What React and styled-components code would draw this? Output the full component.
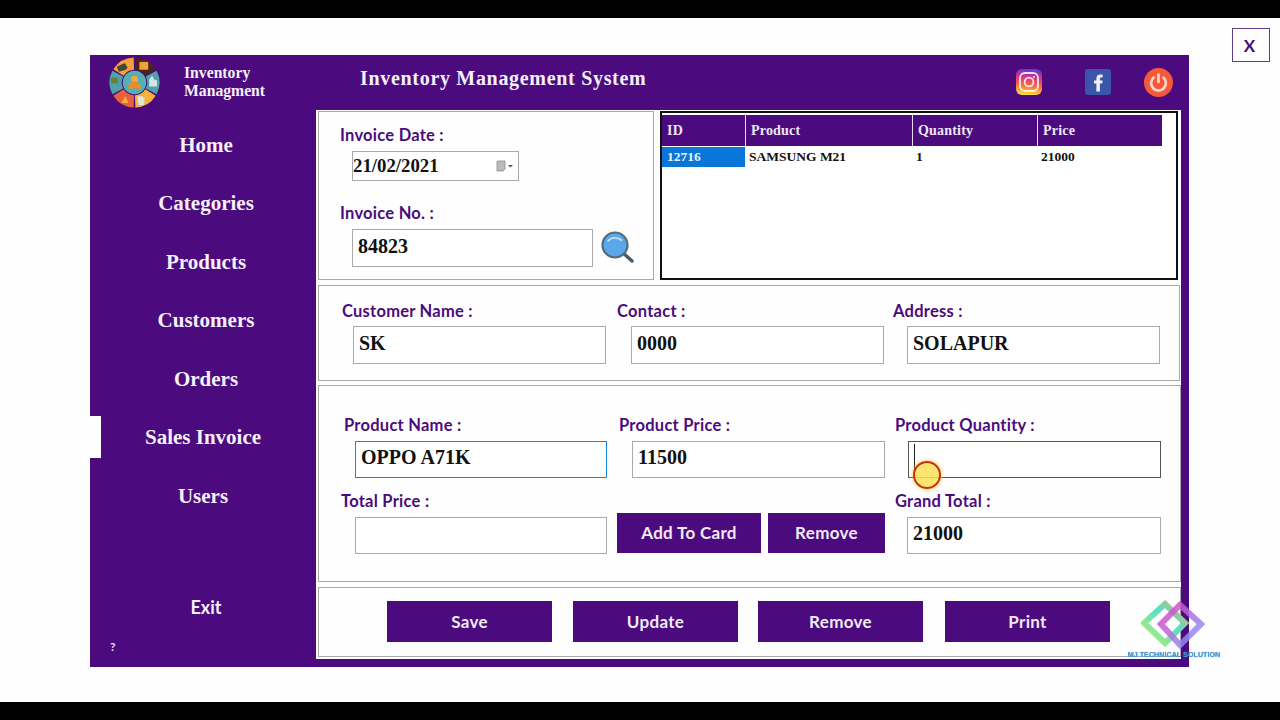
import styled, { createGlobalStyle } from "styled-components";

const PURPLE = "#4b0b7e";

const GlobalStyle = createGlobalStyle`
    html, body {
        margin: 0;
        padding: 0;
        background: #000;
    }
    * {
        box-sizing: border-box;
    }
`;

const Page = styled.div`
    width: 1280px;
    height: 720px;
    overflow: hidden;
    display: flex;
    flex-direction: column;
    background: #000;
`;

const Stage = styled.div`
    height: 684px;
    margin-top: 18px;
    background: #fefefe;
    display: flex;
    align-items: flex-start;
    padding: 10px 0 0 90px;
`;

const Window = styled.div`
    position: relative;
    width: 1099px;
    height: 612px;
    margin-top: 27px;
    background: ${PURPLE};
    display: grid;
    grid-template-columns: 226px 873px;
`;

const CloseButton = styled.div`
    width: 38px;
    height: 34px;
    margin-left: 43px;
    padding-right: 3px;
    border: 1px solid #5d3f86;
    color: ${PURPLE};
    font: 700 17px "Lato", sans-serif;
    display: flex;
    align-items: center;
    justify-content: center;
`;

const Sidebar = styled.aside`
    display: flex;
    flex-direction: column;
    color: #f6f0fb;
    font-family: "Liberation Serif", serif;
`;

const Brand = styled.div`
    height: 61px;
    display: flex;
    align-items: flex-start;
    padding: 2px 0 0 19px;
    gap: 24px;
`;

const BrandName = styled.div`
    font-size: 15.7px;
    font-weight: 700;
    line-height: 18px;
    margin-top: 7px;
`;

const LogoSvg = styled.svg`
    flex-shrink: 0;
`;

const Nav = styled.nav`
    display: flex;
    flex-direction: column;
`;

const NavItem = styled.div`
    position: relative;
    height: 58.5px;
    padding-left: ${(p) => (p.$shift ? 0 : 6)}px;
    display: flex;
    align-items: center;
    justify-content: center;
    font-size: 21px;
    font-weight: 700;
    ${(p) =>
        p.$active &&
        `&::before {
            content: "";
            position: absolute;
            left: 0;
            top: 7px;
            width: 11px;
            height: 42px;
            background: #fff;
        }`}
`;

const ExitItem = styled(NavItem)`
    margin-top: 52px;
    height: 58px;
    font-family: "Lato", sans-serif;
    font-size: 18px;
`;

const Help = styled.div`
    margin: 3px 0 0 20px;
    font: 700 12px "Lato", sans-serif;
    color: #eadff3;
`;

const Main = styled.main`
    display: flex;
    flex-direction: column;
`;

const TitleBar = styled.header`
    height: 55px;
    display: flex;
    align-items: center;
    padding: 0 14px 2px 44px;
`;

const AppTitle = styled.h1`
    flex: 1;
    margin: 0 0 6px;
    color: #f6f0fb;
    font: 700 20px "Liberation Serif", serif;
    letter-spacing: 0.69px;
`;

const SocialIcons = styled.div`
    display: flex;
    align-items: center;
    margin-top: 1px;
    padding-right: 2px;
`;

const SocialSlot = styled.div`
    height: 30px;
    margin-left: ${(p) => p.$gap}px;
    flex-shrink: 0;
    display: flex;
    align-items: center;
    justify-content: center;
`;

const Content = styled.div`
    width: 865px;
    height: 549px;
    background: #fdfdfd;
    padding: 1px 1px 0 2px;
    display: flex;
    flex-direction: column;
`;

const TopRow = styled.div`
    display: flex;
    gap: 6px;
    height: 169px;
`;

const Panel = styled.section`
    border: 1px solid #a9a9a9;
    background: #fefefe;
`;

const InvoicePanel = styled(Panel)`
    width: 336px;
    height: 169px;
    padding: 13px 0 0 21px;
`;

const Label = styled.div`
    color: ${PURPLE};
    font: 700 16.5px/20px "Lato", sans-serif;
    letter-spacing: 0.25px;
    height: 20px;
    white-space: nowrap;
`;

const TextBox = styled.div`
    width: ${(p) => p.$width || 253}px;
    height: ${(p) => p.$height || 38}px;
    margin-left: ${(p) => p.$indent ?? 14}px;
    padding: 0 0 4px ${(p) => p.$pad ?? 5}px;
    border: 1px solid ${(p) => p.$border || "#a9a9a9"};
    background: #fff;
    color: #111;
    font: 700 20px "Liberation Serif", serif;
    display: flex;
    align-items: center;
`;

const DateBox = styled(TextBox)`
    height: 30px;
    justify-content: space-between;
    padding: 0 4px 0 0;
    font-size: 18.8px;
    margin-top: 6px;
`;

const InvoiceNoLabel = styled(Label)`
    margin-top: 22px;
`;

const InvoiceNoRow = styled.div`
    display: flex;
    align-items: center;
    margin-top: 6px;
`;

const SearchSlot = styled.div`
    margin-left: 8px;
    display: flex;
`;

const TablePanel = styled.section`
    width: 518px;
    height: 169px;
    border: 2px solid #111;
    background: #fff;
    padding: 2px 0 0 0;
`;

const TableHead = styled.div`
    width: 500px;
    height: 31px;
    display: grid;
    grid-template-columns: 83px 167px 125px 125px;
    background: ${PURPLE};
`;

const HeadCell = styled.div`
    padding-left: 5px;
    color: #efe6f6;
    font: 700 14px "Liberation Serif", serif;
    letter-spacing: 0.2px;
    display: flex;
    align-items: center;
    border-left: ${(p) => (p.$first ? "0" : "1px solid #e5dbee")};
`;

const TableRow = styled.div`
    width: 500px;
    height: 20px;
    margin-top: 1px;
    display: grid;
    grid-template-columns: 83px 167px 125px 125px;
`;

const RowCell = styled.div`
    padding-left: ${(p) => (p.$selected ? 5 : 4)}px;
    color: ${(p) => (p.$selected ? "#e8f2fb" : "#111")};
    background: ${(p) => (p.$selected ? "#0a77d8" : "transparent")};
    font: 700 13.5px "Liberation Serif", serif;
    display: flex;
    align-items: center;
`;

const CustomerPanel = styled(Panel)`
    width: 862px;
    height: 96px;
    margin-top: 5px;
    padding: 15px 0 0 23px;
    display: grid;
    grid-template-columns: 275px 276px 276px;
    align-content: start;
`;

const ProductPanel = styled(Panel)`
    width: 863px;
    height: 197px;
    margin-top: 4px;
    padding: 29px 0 0 25px;
    display: grid;
    grid-template-columns: 275px 276px 276px;
    align-content: start;
    row-gap: 13px;
`;

const Field = styled.div`
    display: flex;
    flex-direction: column;
    gap: ${(p) => p.$gap ?? 5}px;
`;

const ShiftedField = styled(Field)`
    margin-left: ${(p) => p.$left}px;
`;

const ButtonPair = styled.div`
    display: flex;
    gap: 7px;
    margin: 22px 0 0 -2px;
`;

const Button = styled.div`
    width: ${(p) => p.$width}px;
    height: ${(p) => p.$height || 41}px;
    margin-left: ${(p) => p.$left || 0}px;
    padding-bottom: 1px;
    background: ${PURPLE};
    color: #f1e9f8;
    font: 700 17px "Lato", sans-serif;
    letter-spacing: 0.3px;
    display: flex;
    align-items: center;
    justify-content: center;
`;

const ActionPanel = styled(Panel)`
    width: 863px;
    height: 70px;
    margin-top: 5px;
    padding: 13px 0 0 68px;
    display: flex;
`;

const Caret = styled.span`
    display: inline-block;
    width: 1px;
    height: 28px;
    background: #222;
`;

const CursorMark = styled.div`
    position: absolute;
    left: 823px;
    top: 406px;
    width: 28px;
    height: 28px;
    border-radius: 50%;
    background: rgba(252, 224, 90, 0.86);
    border: 2px solid #c8330f;
    box-shadow: 0 0 4px rgba(250, 190, 50, 0.95);
`;

const Watermark = styled.div`
    position: absolute;
    left: 1037px;
    top: 544px;
    width: 94px;
    display: flex;
    flex-direction: column;
    align-items: center;
`;

const WatermarkText = styled.div`
    margin-top: -3px;
    color: #4a98d2;
    font: 700 7.2px "Liberation Sans", sans-serif;
    text-shadow: 0 0 1px #4a98d2;
    white-space: nowrap;
    filter: blur(0.4px);
`;

// annular sector path for the logo wheel
function sector(a0, a1, r0, r1) {
    const pt = (a, r) => {
        const t = (a * Math.PI) / 180;
        return `${(r * Math.cos(t)).toFixed(2)} ${(r * Math.sin(t)).toFixed(2)}`;
    };
    return `M${pt(a0, r0)} L${pt(a0, r1)} A${r1} ${r1} 0 0 1 ${pt(a1, r1)} L${pt(a1, r0)} A${r0} ${r0} 0 0 0 ${pt(a0, r0)} Z`;
}

function LogoIcon() {
    const parts = [
        { a: 212, b: 268, c: "#f5a03c" },
        { a: 272, b: 328, c: "#4a2418" },
        { a: 332, b: 28, c: "#4fa3a8" },
        { a: 32, b: 88, c: "#f7b23b" },
        { a: 92, b: 148, c: "#e8603c" },
        { a: 152, b: 208, c: "#4fa3a8" },
    ];
    return (
        <LogoSvg width="51" height="51" viewBox="-26 -26 52 52">
            {parts.map((s) => (
                <path key={s.a} d={sector(s.a, s.b, 13, 25.5)} fill={s.c} />
            ))}
            <circle r="12" fill="#55b0b5" />
            <circle cy="-3.5" r="3.5" fill="#f5a83c" />
            <path d="M-7 6 Q-6 -1 0 -1 Q6 -1 7 6 Z" fill="#ec8a30" />
            <path d="M-18 -16L-10 -20L-7 -15L-9 -13L-16 -11Z" fill="#3d4a35" />
            <rect x="5" y="-21" width="9" height="8" fill="#f0a23a" />
            <path d="M15 4V-3L18 -7L20 -3L23 -2V4Z" fill="#e9f0ee" opacity="0.85" />
            <path d="M3 14H8L10 16V23H4Z" fill="#dbe7dd" />
            <path d="M-13 21L-9.5 14L-6 21Z" fill="#f7b23b" />
            <rect x="-24" y="-5" width="7" height="6" fill="#6d7f35" />
        </LogoSvg>
    );
}

function InstagramIcon() {
    return (
        <svg width="26" height="26" viewBox="0 0 26 26">
            <defs>
                <linearGradient id="ig" x1="0.45" y1="1" x2="0.55" y2="0">
                    <stop offset="0" stopColor="#fde03a" />
                    <stop offset="0.35" stopColor="#f9703a" />
                    <stop offset="0.7" stopColor="#d62f8c" />
                    <stop offset="1" stopColor="#5f3ad0" />
                </linearGradient>
            </defs>
            <rect width="26" height="26" rx="6" fill="url(#ig)" />
            <rect x="4" y="4" width="18" height="18" rx="5" fill="none" stroke="#fff" strokeOpacity="0.85" strokeWidth="1.8" />
            <circle cx="13" cy="13" r="4.4" fill="none" stroke="#fff" strokeOpacity="0.85" strokeWidth="1.8" />
            <circle cx="18" cy="8" r="1.1" fill="#fff" fillOpacity="0.85" />
        </svg>
    );
}

function FacebookIcon() {
    return (
        <svg width="26" height="26" viewBox="0 0 26 26">
            <rect width="26" height="26" rx="3" fill="#3b55ab" />
            <path
                d="M11.4 22.5V14.5H9V11.5H11.4V9.5C11.4 7 12.8 5.5 15.3 5.5H17.6V8.5H16.2C15.2 8.5 14.9 9 14.9 10V11.5H17.6L17.2 14.5H14.9V22.5Z"
                fill="#eef1fa"
            />
        </svg>
    );
}

function PowerIcon() {
    return (
        <svg width="29" height="29" viewBox="0 0 29 29">
            <circle cx="14.5" cy="14.5" r="14.5" fill="#f4593a" />
            <path d="M9.6 9.6A7.4 7.4 0 1 0 19.4 9.6" fill="none" stroke="#fbd6cb" strokeWidth="2.7" strokeLinecap="round" />
            <path d="M14.5 6.5V14" stroke="#fbd6cb" strokeWidth="2.7" strokeLinecap="round" />
        </svg>
    );
}

function SearchIcon() {
    return (
        <svg width="34" height="34" viewBox="0 0 34 34">
            <path d="M21 21L31 30" stroke="#4c5a63" strokeWidth="3.4" strokeLinecap="round" />
            <circle cx="14" cy="14" r="12.5" fill="#5aa8ea" stroke="#566b78" strokeWidth="2.2" />
            <path d="M6.5 10.5Q13 3.5 21 9.5" fill="none" stroke="#cfe6fa" strokeWidth="1.6" />
        </svg>
    );
}

function CalendarIcon() {
    return (
        <svg width="18" height="12" viewBox="0 0 18 12">
            <path d="M1 1H9V9L7 11H1Z" fill="#b9bdb9" stroke="#8a8f8a" strokeWidth="0.8" />
            <path d="M12 5H17L14.5 7.5Z" fill="#555" />
        </svg>
    );
}

function WatermarkLogo() {
    return (
        <svg width="66" height="54" viewBox="0 0 66 54">
            <defs>
                <linearGradient id="wmA" x1="0" y1="1" x2="1" y2="0">
                    <stop offset="0" stopColor="#b8f06a" />
                    <stop offset="0.6" stopColor="#58e0c8" />
                    <stop offset="1" stopColor="#e0b060" />
                </linearGradient>
                <linearGradient id="wmB" x1="0" y1="0" x2="1" y2="1">
                    <stop offset="0" stopColor="#e83cc0" />
                    <stop offset="1" stopColor="#7aa0ff" />
                </linearGradient>
            </defs>
            <path d="M24 5L44 24L24 44L3 24Z" fill="none" stroke="url(#wmA)" strokeWidth="6" />
            <path d="M39 6L60 25L39 46L20 25Z" fill="none" stroke="url(#wmB)" strokeWidth="6" opacity="0.85" />
        </svg>
    );
}

const NAV_ITEMS = ["Home", "Categories", "Products", "Customers", "Orders", "Sales Invoice", "Users"];

export default function App() {
    return (
        <Page>
            <GlobalStyle />
            <Stage>
                <Window>
                    <Sidebar>
                        <Brand>
                            <LogoIcon />
                            <BrandName>
                                Inventory
                                <br />
                                Managment
                            </BrandName>
                        </Brand>
                        <Nav>
                            {NAV_ITEMS.map((item) => (
                                <NavItem
                                    key={item}
                                    $active={item === "Sales Invoice"}
                                    $shift={item === "Sales Invoice" || item === "Users"}
                                >
                                    {item}
                                </NavItem>
                            ))}
                        </Nav>
                        <ExitItem>Exit</ExitItem>
                        <Help>?</Help>
                    </Sidebar>
                    <Main>
                        <TitleBar>
                            <AppTitle>Inventory Management System</AppTitle>
                            <SocialIcons>
                                <SocialSlot $gap={0}>
                                    <InstagramIcon />
                                </SocialSlot>
                                <SocialSlot $gap={43}>
                                    <FacebookIcon />
                                </SocialSlot>
                                <SocialSlot $gap={33}>
                                    <PowerIcon />
                                </SocialSlot>
                            </SocialIcons>
                        </TitleBar>
                        <Content>
                            <TopRow>
                                <InvoicePanel>
                                    <Label>Invoice Date :</Label>
                                    <DateBox $width={167} $indent={12}>
                                        21/02/2021
                                        <CalendarIcon />
                                    </DateBox>
                                    <InvoiceNoLabel>Invoice No. :</InvoiceNoLabel>
                                    <InvoiceNoRow>
                                        <TextBox $width={241} $indent={12}>
                                            84823
                                        </TextBox>
                                        <SearchSlot>
                                            <SearchIcon />
                                        </SearchSlot>
                                    </InvoiceNoRow>
                                </InvoicePanel>
                                <TablePanel>
                                    <TableHead>
                                        <HeadCell $first>ID</HeadCell>
                                        <HeadCell>Product</HeadCell>
                                        <HeadCell>Quantity</HeadCell>
                                        <HeadCell>Price</HeadCell>
                                    </TableHead>
                                    <TableRow>
                                        <RowCell $selected>12716</RowCell>
                                        <RowCell>SAMSUNG M21</RowCell>
                                        <RowCell>1</RowCell>
                                        <RowCell>21000</RowCell>
                                    </TableRow>
                                </TablePanel>
                            </TopRow>
                            <CustomerPanel>
                                <Field>
                                    <Label>Customer Name :</Label>
                                    <TextBox $indent={11}>SK</TextBox>
                                </Field>
                                <Field>
                                    <Label>Contact :</Label>
                                    <TextBox>0000</TextBox>
                                </Field>
                                <Field>
                                    <Label>Address :</Label>
                                    <TextBox>SOLAPUR</TextBox>
                                </Field>
                            </CustomerPanel>
                            <ProductPanel>
                                <Field $gap={6}>
                                    <Label>Product Name :</Label>
                                    <TextBox $indent={11} $width={252} $height={37} $border="#1a86d8">
                                        OPPO A71K
                                    </TextBox>
                                </Field>
                                <Field $gap={6}>
                                    <Label>Product Price :</Label>
                                    <TextBox $indent={13} $height={37}>
                                        11500
                                    </TextBox>
                                </Field>
                                <Field $gap={6}>
                                    <Label>Product Quantity :</Label>
                                    <TextBox $indent={13} $height={37} $border="#555" $pad={5}>
                                        <Caret />
                                    </TextBox>
                                </Field>
                                <ShiftedField $left={-3} $gap={6}>
                                    <Label>Total Price :</Label>
                                    <TextBox $width={252} $height={37} />
                                </ShiftedField>
                                <ButtonPair>
                                    <Button $width={144} $height={40}>
                                        Add To Card
                                    </Button>
                                    <Button $width={117} $height={40}>
                                        Remove
                                    </Button>
                                </ButtonPair>
                                <Field $gap={6}>
                                    <Label>Grand Total :</Label>
                                    <TextBox $indent={12} $width={254} $height={37}>
                                        21000
                                    </TextBox>
                                </Field>
                            </ProductPanel>
                            <ActionPanel>
                                <Button $width={165}>Save</Button>
                                <Button $width={165} $left={21}>
                                    Update
                                </Button>
                                <Button $width={165} $left={20}>
                                    Remove
                                </Button>
                                <Button $width={165} $left={22}>
                                    Print
                                </Button>
                            </ActionPanel>
                        </Content>
                    </Main>
                    <CursorMark />
                    <Watermark>
                        <WatermarkLogo />
                        <WatermarkText>MJ TECHNICAL SOLUTION</WatermarkText>
                    </Watermark>
                </Window>
                <CloseButton>X</CloseButton>
            </Stage>
        </Page>
    );
}
